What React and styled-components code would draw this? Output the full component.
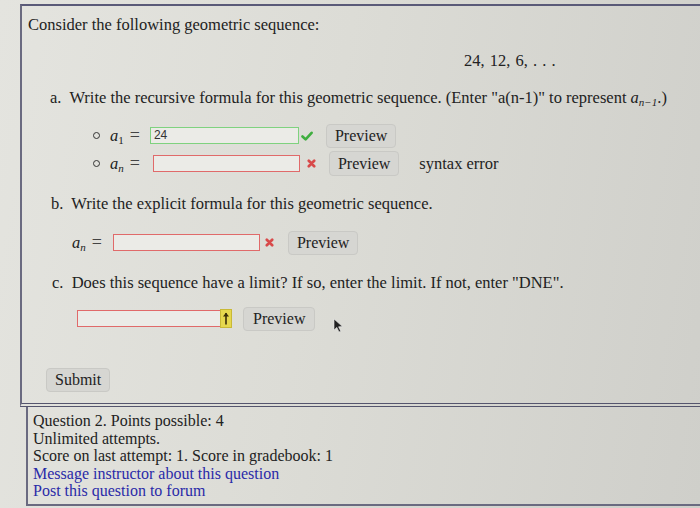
import React from 'react';
import styled, { createGlobalStyle } from 'styled-components';

const GlobalStyle = createGlobalStyle`
  html, body {
    margin: 0;
    padding: 0;
  }
  body {
    width: 700px;
    height: 508px;
    overflow: hidden;
    background: linear-gradient(100deg, #e4e4df 0%, #dcdcd6 45%, #cfcfca 100%);
    font-family: "Liberation Serif", "Times New Roman", serif;
    color: #222;
  }
`;

const Page = styled.div`
  padding: 4px 0 0 20px;
  overflow: hidden;
`;

const QuestionPanel = styled.div`
  margin-right: -20px;
  border-top: 2px solid #5a5a78;
  border-left: 2px solid #6a6a80;
  border-bottom: 4px double #55556e;
  padding: 8px 0 11px 6px;
`;

const Intro = styled.p`
  margin: 0;
  font-size: 16.5px;
  line-height: 22px;
`;

const Sequence = styled.div`
  margin: 14px 0 0 0;
  padding-left: 436px;
  font-size: 16.5px;
  line-height: 22px;
  word-spacing: 1px;
`;

const Part = styled.div`
  margin-top: ${p => p.$top}px;
  padding-left: ${p => p.$indent}px;
`;

const PartText = styled.p`
  margin: 0;
  font-size: 16.5px;
  line-height: 22px;
`;

const Math = styled.span`
  font-style: italic;
  font-family: "Liberation Serif", serif;
  & sub {
    font-size: 11px;
    vertical-align: -3px;
    line-height: 0;
  }
`;

const Eq = styled.span`
  font-style: normal;
  font-size: 18px;
  margin: 0 ${p => p.$after || 10}px 0 6px;
  color: #444;
`;

const Bullets = styled.ul`
  list-style: none;
  margin: ${p => p.$top}px 0 0 0;
  padding: 0 0 0 65px;
  display: flex;
  flex-direction: column;
  gap: 3px;
`;

const Row = styled.li`
  display: flex;
  align-items: center;
  height: 25px;
  font-size: 16.5px;
  &::before {
    content: '';
    width: 5px;
    height: 5px;
    border: 1px solid #333;
    border-radius: 50%;
    margin-right: 10px;
  }
`;

const Line = styled.div`
  display: flex;
  align-items: center;
  height: 25px;
  font-size: 16.5px;
  margin-top: ${p => p.$top}px;
  padding-left: ${p => p.$indent}px;
`;

const Field = styled.div`
  width: ${p => p.$w}px;
  height: 15px;
  border: 1px solid ${p => (p.$ok ? '#7fd27f' : '#e06a6a')};
  background: #ebebe7;
  font-family: "Liberation Sans", Arial, sans-serif;
  font-size: 12px;
  line-height: 15px;
  padding-left: 3px;
  color: #333;
  box-sizing: content-box;
`;

const Mark = styled.span`
  display: inline-flex;
  width: 12px;
  justify-content: center;
  margin: 0 ${p => p.$gap}px 0 ${p => p.$pre}px;
`;

const Button = styled.button`
  font-family: "Liberation Serif", "Times New Roman", serif;
  font-size: 16px;
  color: #222;
  background: #d6d6d2;
  border: 1px solid #c9c9c5;
  border-radius: 4px;
  height: ${p => p.$h || 24}px;
  padding: 0 ${p => p.$pad || 8}px;
  cursor: default;
`;

const Note = styled.span`
  margin-left: 20px;
  font-size: 16.5px;
`;

const Hint = styled.span`
  display: inline-flex;
  align-items: center;
  justify-content: center;
  width: 10px;
  height: 17px;
  background: #e6d84e;
  border: 1px solid #c9b936;
  margin-left: -1px;
  margin-right: 11px;
`;

const SubmitWrap = styled.div`
  margin-top: 37px;
  padding-left: 18px;
`;

const InfoPanel = styled.div`
  margin: 0 -20px 0 6px;
  border-left: 2px solid #6a6a80;
  border-bottom: 2px solid #6a6a80;
  padding: 5px 0 4px 5px;
  font-size: 16px;
  line-height: 17.5px;
  height: 99px;
  box-sizing: border-box;
`;

const InfoLine = styled.div`
  color: ${p => (p.$link ? '#2a2aa8' : '#222')};
`;

const Check = () => (
  <svg width="12" height="10" viewBox="0 0 12 10">
    <path d="M1.5 5.5 L4.6 8.4 L10.6 1.8" fill="none" stroke="#3fae3f" strokeWidth="2.6" strokeLinecap="round" strokeLinejoin="round" />
  </svg>
);

const Cross = () => (
  <svg width="9" height="9" viewBox="0 0 10 10">
    <path d="M2 2 L8 8 M8 2 L2 8" stroke="#d84a4a" strokeWidth="3" strokeLinecap="round" />
  </svg>
);

const Arrow = () => (
  <svg width="8" height="13" viewBox="0 0 8 13">
    <path d="M4 1 L4 12.5" stroke="#3a2e08" strokeWidth="1.6" />
    <path d="M1 4.5 L4 0.8 L7 4.5 Z" fill="#3a2e08" />
  </svg>
);

const Pointer = styled.svg`
  margin: 14px 0 0 18px;
`;

const A1 = () => (
  <Math>a<sub style={{ fontStyle: 'normal' }}>1</sub></Math>
);

const An = () => (
  <Math>a<sub>n</sub></Math>
);

export default function App() {
  return (
    <>
      <GlobalStyle />
      <Page>
        <QuestionPanel>
          <Intro>Consider the following geometric sequence:</Intro>
          <Sequence>24, 12, 6, . . .</Sequence>
          <Part $top={15} $indent={22}>
            <PartText>
              a.&nbsp; Write the recursive formula for this geometric sequence. (Enter "a(n-1)" to represent{' '}
              <Math>a<sub>n−1</sub></Math>.)
            </PartText>
          </Part>
          <Bullets $top={14}>
            <Row>
              <A1 /><Eq>=</Eq>
              <Field $w={144} $ok>24</Field>
              <Mark $pre={2} $gap={13}><Check /></Mark>
              <Button>Preview</Button>
            </Row>
            <Row>
              <An /><Eq $after={13}>=</Eq>
              <Field $w={142} />
              <Mark $pre={6} $gap={11}><Cross /></Mark>
              <Button $h={25}>Preview</Button>
              <Note>syntax error</Note>
            </Row>
          </Bullets>
          <Part $top={17} $indent={23}>
            <PartText>b.&nbsp; Write the explicit formula for this geometric sequence.</PartText>
          </Part>
          <Line $top={15} $indent={44}>
            <An /><Eq $after={11}>=</Eq>
            <Field $w={142} />
            <Mark $pre={4} $gap={12}><Cross /></Mark>
            <Button>Preview</Button>
          </Line>
          <Part $top={17} $indent={24}>
            <PartText>c.&nbsp; Does this sequence have a limit? If so, enter the limit. If not, enter "DNE".</PartText>
          </Part>
          <Line $top={12} $indent={49}>
            <Field $w={139} />
            <Hint><Arrow /></Hint>
            <Button $pad={9}>Preview</Button>
            <Pointer width="11" height="15" viewBox="0 0 11 15">
              <path d="M1 1 L1 12 L3.8 9.4 L6 14 L7.8 13.2 L5.6 8.8 L9.5 8.6 Z" fill="#222" stroke="#eee" strokeWidth="0.6" />
            </Pointer>
          </Line>
          <SubmitWrap>
            <Button>Submit</Button>
          </SubmitWrap>
        </QuestionPanel>
        <InfoPanel>
          <InfoLine>Question 2. Points possible: 4</InfoLine>
          <InfoLine>Unlimited attempts.</InfoLine>
          <InfoLine>Score on last attempt: 1. Score in gradebook: 1</InfoLine>
          <InfoLine $link>Message instructor about this question</InfoLine>
          <InfoLine $link>Post this question to forum</InfoLine>
        </InfoPanel>
      </Page>
    </>
  );
}
